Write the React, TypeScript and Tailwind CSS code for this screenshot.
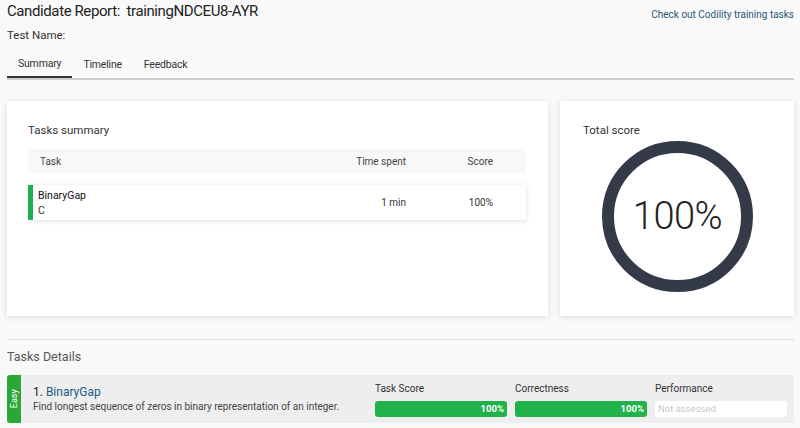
import React from 'react';

const tabs = ['Summary', 'Timeline', 'Feedback'];

const ScoreBar = ({ label, value }: { label: string; value: number | null }) => (
  <div className="w-[132px] flex flex-col">
    <span className="text-[10px] leading-[14px] text-[#333] mb-[5px]">{label}</span>
    {value === null ? (
      <div className="h-[16px] rounded-[3px] bg-white flex items-center px-[3px] text-[9.5px] text-[#c8c8c8]">
        Not assessed
      </div>
    ) : (
      <div className="h-[16px] rounded-[3px] bg-[#eee] overflow-hidden">
        <div
          className="h-full bg-[#22b24c] flex items-center justify-end pr-[3px] text-[9.5px] font-bold text-white"
          style={{ width: `${value}%` }}
        >
          {value}%
        </div>
      </div>
    )}
  </div>
);

const App: React.FC = () => {
  return (
    <div className="w-[800px] h-[428px] overflow-hidden bg-[#f9f9f9] font-['Roboto',sans-serif] text-[#222]">
      {/* header */}
      <div className="flex justify-between items-start pl-[7px] pr-[6px]">
        <h1 className="pt-[1px] text-[15px] leading-5 tracking-[-0.4px] text-[#222]">
          Candidate Report:&nbsp; trainingNDCEU8-AYR
        </h1>
        <a className="mt-[7px] text-[10px] leading-4 text-[#2a5777]">Check out Codility training tasks</a>
      </div>
      <div className="pl-[7px] mt-[4px] text-[11.5px] leading-4 text-[#333]">Test Name:</div>

      {/* tabs */}
      <div className="ml-[7px] mr-[6px] mt-[8px] flex border-b-[2px] border-[#cfcfcf]">
        {tabs.map((t, i) => (
          <div
            key={t}
            className={
              i === 0
                ? 'px-[11px] h-[27px] flex items-center text-[10.5px] tracking-[-0.2px] text-[#333] border-b-[2px] border-[#333] -mb-[2px]'
                : 'px-[11px] h-[27px] flex items-center text-[10.5px] tracking-[-0.2px] text-[#333]'
            }
          >
            {t}
          </div>
        ))}
      </div>

      {/* cards */}
      <div className="flex gap-[12px] pl-[7px] pr-[6px] mt-[21px]">
        <div className="w-[541px] h-[215px] bg-white shadow-[0_1px_6px_rgba(0,0,0,0.12)] pl-[21px] pr-[22px] pt-[21px]">
          <div className="text-[11.5px] leading-4 text-[#333]">Tasks summary</div>
          <div className="mt-[11px] h-[24px] bg-[#f8f8f8] flex items-center text-[10px] text-[#444]">
            <span className="pl-[12px] flex-1">Task</span>
            <span className="w-[70px] text-right">Time spent</span>
            <span className="w-[120px] pr-[33px] text-right">Score</span>
          </div>
          <div className="mt-[12px] h-[35px] bg-white shadow-[0_1px_5px_rgba(0,0,0,0.13)] flex items-center">
            <div className="w-[5px] h-full bg-[#1eae4e] rounded-l-[1px]" />
            <div className="pl-[5px] flex-1 flex flex-col text-[10.5px] leading-[15px]">
              <span className="text-[#111]">BinaryGap</span>
              <span className="text-[#333]">C</span>
            </div>
            <span className="w-[60px] text-right text-[10px] text-[#333]">1 min</span>
            <span className="w-[120px] pr-[33px] text-right text-[10px] text-[#333]">100%</span>
          </div>
        </div>

        <div className="w-[234px] h-[215px] bg-white shadow-[0_1px_6px_rgba(0,0,0,0.12)] pt-[21px] flex flex-col">
          <div className="pl-[23px] text-[11.5px] leading-4 text-[#333]">Total score</div>
          <div className="mt-[3px] flex justify-center pl-[1px]">
            <div className="w-[151px] h-[151px] rounded-full border-[12px] border-[#353a48] flex items-center justify-center">
              <span className="text-[38px] font-light text-[#222] tracking-[-0.5px]">100%</span>
            </div>
          </div>
        </div>
      </div>

      {/* tasks details */}
      <div className="ml-[7px] mr-[6px] mt-[23px] border-t border-[#dedede]" />
      <div className="pl-[7px] mt-[9px] text-[12.5px] leading-4 text-[#555]">Tasks Details</div>
      <div className="ml-[7px] mr-[6px] mt-[10px] h-[48px] bg-[#eeeeee] flex items-stretch">
        <div className="w-[14px] bg-[#2aa736] rounded-l-[3px] flex items-center justify-center">
          <span className="-rotate-90 text-[9px] text-white whitespace-nowrap">Easy</span>
        </div>
        <div className="pl-[12px] flex-1 flex flex-col justify-center">
          <div className="text-[12px] leading-4 text-[#222]">
            1. <span className="text-[#1b5d87]">BinaryGap</span>
          </div>
          <div className="text-[10px] leading-[14px] text-[#444]">
            Find longest sequence of zeros in binary representation of an integer.
          </div>
        </div>
        <div className="flex gap-[8px] pr-[7px] pt-[7px]">
          <ScoreBar label="Task Score" value={100} />
          <ScoreBar label="Correctness" value={100} />
          <ScoreBar label="Performance" value={null} />
        </div>
      </div>
    </div>
  );
};

export default App;
